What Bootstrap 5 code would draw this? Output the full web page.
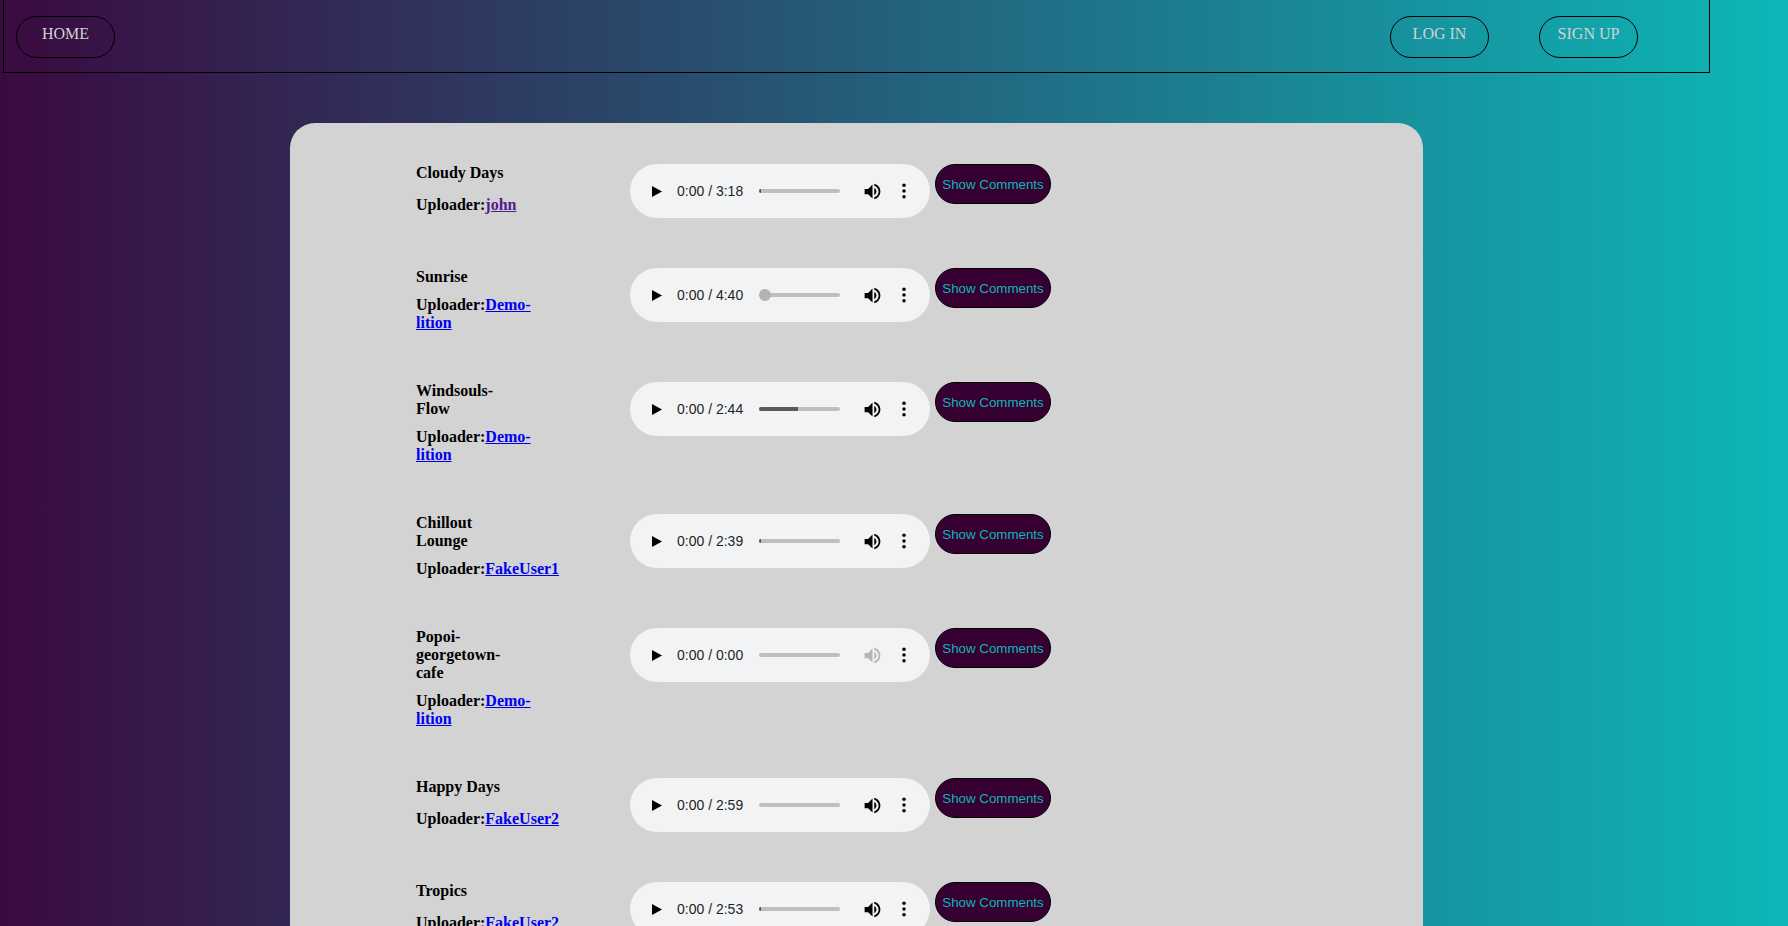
<!DOCTYPE html>
<html lang="en">
<head>
<meta charset="utf-8">
<title>Tracks</title>
<link href="https://cdn.jsdelivr.net/npm/bootstrap@5.3.0/dist/css/bootstrap.min.css" rel="stylesheet">
<style>
html, body { height: 926px; overflow: hidden; }
body { margin: 0; background: linear-gradient(to right, #3a0a40, #0db7b7); font-family: "Liberation Serif", serif; font-size: 16px; line-height: normal; color: #000; }
.page-shell { width: 1713px; }
.top-nav { margin-left: 3px; width: 1707px; height: 73px; border: 1px solid #000; border-top: 0; padding: 16px 71px 0 12px; }
.nav-pill { width: 99px; height: 42px; border: 1px solid #000; border-radius: 21px; color: #d3d3d3; text-decoration: none; text-align: center; padding-top: 8px; font-size: 16px; }
.nav-gap { margin-left: 50px; }
.tracks-panel { width: 1133px; height: 900px; margin-top: 50px; background: #d3d3d3; border-radius: 25px 25px 0 0; padding: 41px 0 0 126px; }
.track-row { margin-bottom: 50px; min-height: 54px; }
.track-info { width: 214px; flex: none; font-weight: 700; }
.track-name { width: 100px; margin: 0 0 10px; }
.track-name-loose { margin-bottom: 14px; }
.track-owner { width: 120px; margin: 0; }
.track-owner a { color: #00e; text-decoration: underline; }
.track-owner a.seen { color: #551a8b; }
.player { width: 300px; height: 54px; flex: none; background: #f1f3f4; border-radius: 27px; font-family: "Liberation Sans", sans-serif; font-size: 14px; color: #1f1f1f; padding-left: 22px; }
.player-play { width: 10px; height: 11px; flex: none; }
.player-time { margin-left: 15px; width: 82px; flex: none; white-space: nowrap; }
.player-track { position: relative; width: 81px; height: 4px; flex: none; background: #bfbfbf; border-radius: 2px; }
.fill-tick { position: absolute; left: 0; top: 0; height: 4px; width: 2px; background: #555; border-radius: 2px 0 0 2px; }
.fill-half { position: absolute; left: 0; top: 0; height: 4px; width: 39px; background: #5a5a5a; border-radius: 2px 0 0 2px; }
.fill-hover { position: absolute; left: 0; top: -4px; width: 12px; height: 12px; background: #b3b3b3; border-radius: 50%; }
.player-vol { width: 21px; height: 21px; margin-left: 22px; flex: none; }
.player-more { width: 4px; height: 16px; margin-left: 19px; flex: none; }
.comment-btn { width: 116px; height: 40px; margin-left: 5px; flex: none; background: #360033; color: #10b5b5; border: 1px solid #000; border-radius: 20px; font-family: "Liberation Sans", sans-serif; font-size: 13.33px; padding: 0; white-space: nowrap; }
</style>
</head>
<body>
<svg class="d-none" xmlns="http://www.w3.org/2000/svg">
  <symbol id="ico-play" viewBox="0 0 10 11"><path d="M0 0L10 5.5L0 11Z"/></symbol>
  <symbol id="ico-vol" viewBox="0 0 24 24"><path d="M3 9v6h4l5 5V4L7 9H3zm13.5 3c0-1.77-1.02-3.29-2.5-4.03v8.05c1.48-.73 2.5-2.25 2.5-4.02zM14 3.23v2.06c2.89.86 5 3.54 5 6.71s-2.11 5.85-5 6.71v2.06c4.01-.91 7-4.49 7-8.77s-2.99-7.86-7-8.77z"/></symbol>
  <symbol id="ico-more" viewBox="0 0 4 16"><circle cx="2" cy="2.2" r="1.75"/><circle cx="2" cy="8" r="1.75"/><circle cx="2" cy="13.8" r="1.75"/></symbol>
</svg>
<div class="page-shell">
  <nav class="top-nav d-flex align-items-start">
    <a class="nav-pill" href="#">HOME</a>
    <a class="nav-pill ms-auto" href="#">LOG IN</a>
    <a class="nav-pill nav-gap" href="#">SIGN UP</a>
  </nav>
  <main class="tracks-panel mx-auto">

    <div class="track-row d-flex align-items-start">
      <div class="track-info"><p class="track-name track-name-loose">Cloudy Days</p><p class="track-owner">Uploader:<a class="seen" href="#">john</a></p></div>
      <div class="player d-flex align-items-center"><svg class="player-play"><use href="#ico-play"/></svg><span class="player-time">0:00 / 3:18</span><div class="player-track"><span class="fill-tick"></span></div><svg class="player-vol"><use href="#ico-vol"/></svg><svg class="player-more"><use href="#ico-more"/></svg></div>
      <button class="comment-btn" type="button">Show Comments</button>
    </div>

    <div class="track-row d-flex align-items-start">
      <div class="track-info"><p class="track-name">Sunrise</p><p class="track-owner">Uploader:<a href="#">Demo-lition</a></p></div>
      <div class="player d-flex align-items-center"><svg class="player-play"><use href="#ico-play"/></svg><span class="player-time">0:00 / 4:40</span><div class="player-track"><span class="fill-hover"></span></div><svg class="player-vol"><use href="#ico-vol"/></svg><svg class="player-more"><use href="#ico-more"/></svg></div>
      <button class="comment-btn" type="button">Show Comments</button>
    </div>

    <div class="track-row d-flex align-items-start">
      <div class="track-info"><p class="track-name">Windsouls-Flow</p><p class="track-owner">Uploader:<a href="#">Demo-lition</a></p></div>
      <div class="player d-flex align-items-center"><svg class="player-play"><use href="#ico-play"/></svg><span class="player-time">0:00 / 2:44</span><div class="player-track"><span class="fill-half"></span></div><svg class="player-vol"><use href="#ico-vol"/></svg><svg class="player-more"><use href="#ico-more"/></svg></div>
      <button class="comment-btn" type="button">Show Comments</button>
    </div>

    <div class="track-row d-flex align-items-start">
      <div class="track-info"><p class="track-name">Chillout Lounge</p><p class="track-owner">Uploader:<a href="#">FakeUser1</a></p></div>
      <div class="player d-flex align-items-center"><svg class="player-play"><use href="#ico-play"/></svg><span class="player-time">0:00 / 2:39</span><div class="player-track"><span class="fill-tick"></span></div><svg class="player-vol"><use href="#ico-vol"/></svg><svg class="player-more"><use href="#ico-more"/></svg></div>
      <button class="comment-btn" type="button">Show Comments</button>
    </div>

    <div class="track-row d-flex align-items-start">
      <div class="track-info"><p class="track-name">Popoi-georgetown-cafe</p><p class="track-owner">Uploader:<a href="#">Demo-lition</a></p></div>
      <div class="player d-flex align-items-center"><svg class="player-play"><use href="#ico-play"/></svg><span class="player-time">0:00 / 0:00</span><div class="player-track"></div><svg class="player-vol opacity-25"><use href="#ico-vol"/></svg><svg class="player-more"><use href="#ico-more"/></svg></div>
      <button class="comment-btn" type="button">Show Comments</button>
    </div>

    <div class="track-row d-flex align-items-start">
      <div class="track-info"><p class="track-name track-name-loose">Happy Days</p><p class="track-owner">Uploader:<a href="#">FakeUser2</a></p></div>
      <div class="player d-flex align-items-center"><svg class="player-play"><use href="#ico-play"/></svg><span class="player-time">0:00 / 2:59</span><div class="player-track"></div><svg class="player-vol"><use href="#ico-vol"/></svg><svg class="player-more"><use href="#ico-more"/></svg></div>
      <button class="comment-btn" type="button">Show Comments</button>
    </div>

    <div class="track-row d-flex align-items-start">
      <div class="track-info"><p class="track-name track-name-loose">Tropics</p><p class="track-owner">Uploader:<a href="#">FakeUser2</a></p></div>
      <div class="player d-flex align-items-center"><svg class="player-play"><use href="#ico-play"/></svg><span class="player-time">0:00 / 2:53</span><div class="player-track"><span class="fill-tick"></span></div><svg class="player-vol"><use href="#ico-vol"/></svg><svg class="player-more"><use href="#ico-more"/></svg></div>
      <button class="comment-btn" type="button">Show Comments</button>
    </div>

  </main>
</div>
<script src="https://cdn.jsdelivr.net/npm/bootstrap@5.3.0/dist/js/bootstrap.bundle.min.js"></script>
</body>
</html>
